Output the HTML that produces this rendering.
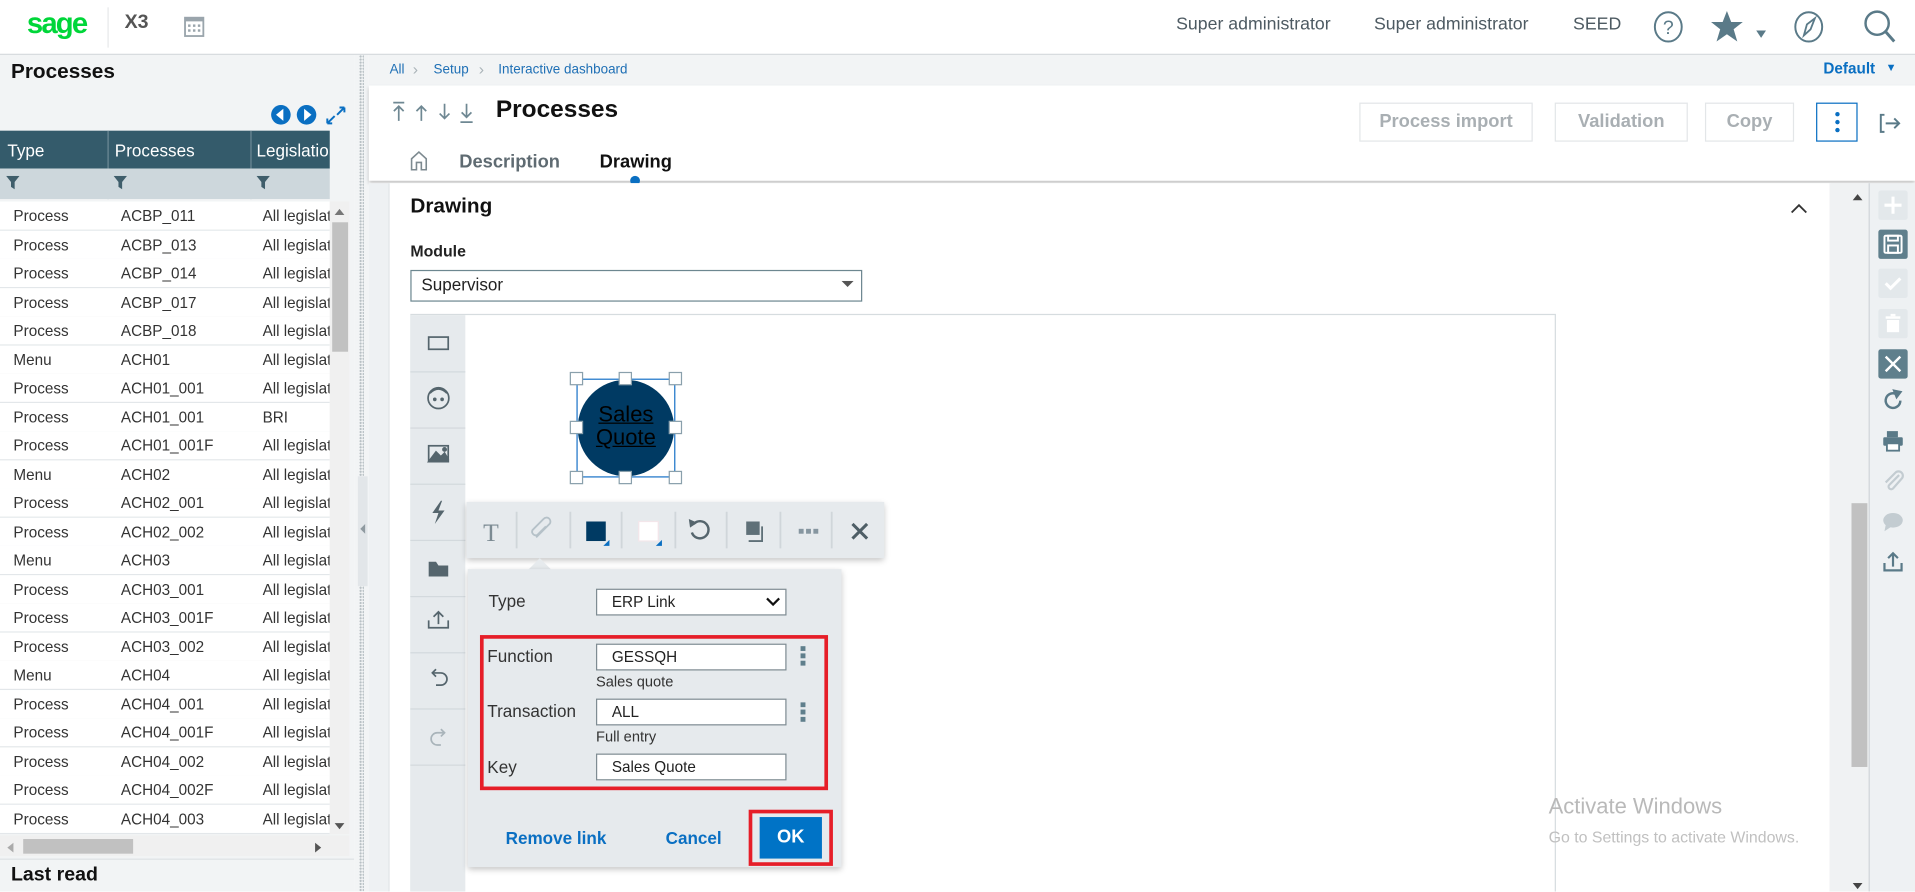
<!DOCTYPE html>
<html><head><meta charset="utf-8">
<style>
html,body{margin:0;padding:0;width:1915px;height:891px;overflow:hidden;background:#fff}
#w{position:absolute;left:0;top:0;width:1568px;height:730px;transform:scale(1.22130);transform-origin:0 0;font-family:"Liberation Sans",sans-serif;color:#222;overflow:hidden}
.a{position:absolute}
.t{position:absolute;white-space:nowrap}
.row{position:absolute;left:0;width:270px;height:23px;border-bottom:1px solid #e3e7ea;background:#fff;font-size:12.5px;color:#333}
.row span{position:absolute;top:5px;white-space:nowrap;overflow:hidden}
.row span:nth-child(3){width:55px}
.btn{position:absolute;top:84px;height:30px;border:1.5px solid #e3e6e8;background:#fff;color:#a9afb3;font-size:15px;font-weight:bold;text-align:center;line-height:30px}
.tool{position:absolute;left:336px;width:45px;height:46px;border-bottom:1px solid #d3d9dd}
.rt{position:absolute;left:1538px;width:24px;height:24px;border-radius:2px}
.lbl{position:absolute;font-size:14px;color:#333}
.inp{position:absolute;left:488px;width:154px;height:20px;border:1px solid #7f8c93;background:#fff;font-size:12.5px;line-height:20px;padding-left:12px;box-sizing:content-box}
</style></head><body><div id="w">

<!-- top bar -->
<div class="a" style="left:0;top:0;width:1568px;height:44px;background:#fff;border-bottom:1px solid #d6dadd"></div>
<div class="t" style="left:22px;top:6px;font-size:24px;font-weight:bold;color:#00d639;letter-spacing:-1.5px">sage</div>
<div class="a" style="left:88px;top:6px;width:1px;height:33px;background:#e6e8ea"></div>
<div class="t" style="left:102px;top:10px;font-size:16px;font-weight:bold;color:#555">X3</div>
<svg class="a" style="left:150px;top:11px" width="18" height="20" viewBox="0 0 18 20"><rect x="1.5" y="3.5" width="15" height="15" fill="none" stroke="#9aa5ac" stroke-width="1.5"/><rect x="1.5" y="3.5" width="15" height="3" fill="#9aa5ac"/><g fill="#9aa5ac"><rect x="4" y="9" width="2" height="2"/><rect x="8" y="9" width="2" height="2"/><rect x="12" y="9" width="2" height="2"/><rect x="4" y="13" width="2" height="2"/><rect x="8" y="13" width="2" height="2"/><rect x="12" y="13" width="2" height="2"/></g></svg>
<div class="t" style="left:963px;top:12px;font-size:14.5px;color:#4d5a62">Super administrator</div>
<div class="t" style="left:1125px;top:12px;font-size:14.5px;color:#4d5a62">Super administrator</div>
<div class="t" style="left:1288px;top:12px;font-size:14.5px;color:#4d5a62">SEED</div>
<svg class="a" style="left:1352px;top:7px" width="28" height="30"><ellipse cx="14" cy="15" rx="11" ry="12" fill="none" stroke="#5a7a88" stroke-width="1.6"/><text x="14" y="21" font-size="16" text-anchor="middle" fill="#5a7a88" font-family="Liberation Sans">?</text></svg>
<svg class="a" style="left:1400px;top:7px" width="50" height="30"><polygon points="14,2 17.5,11 27,11 19.5,17 22.5,27 14,21 5.5,27 8.5,17 1,11 10.5,11" fill="#5a7a88"/><polygon points="38,18 46,18 42,24" fill="#5a7a88"/></svg>
<svg class="a" style="left:1467px;top:7px" width="28" height="30"><ellipse cx="14" cy="15" rx="11" ry="12" fill="none" stroke="#5a7a88" stroke-width="1.6"/><path d="M19 8 L15.5 17 L10 22 L12.5 13 Z" fill="none" stroke="#5a7a88" stroke-width="1.5"/></svg>
<svg class="a" style="left:1524px;top:6px" width="30" height="32"><circle cx="13" cy="13" r="9.5" fill="none" stroke="#5a7a88" stroke-width="2"/><line x1="20" y1="20" x2="27" y2="28" stroke="#5a7a88" stroke-width="2.4"/></svg>

<!-- left panel -->
<div class="a" style="left:0;top:45px;width:290px;height:685px;background:#f2f4f5"></div>
<div class="t" style="left:9px;top:49px;font-size:17px;font-weight:bold;color:#111">Processes</div>
<svg class="a" style="left:221px;top:85px" width="66" height="18"><circle cx="9" cy="9" r="8" fill="#0a6fc2"/><polygon points="11,4 5,9 11,14" fill="#fff"/><circle cx="30" cy="9" r="8" fill="#0a6fc2"/><polygon points="28,4 34,9 28,14" fill="#fff"/><path d="M47 16 L53 10 M47 16 L47 12 M47 16 L51 16 M61 3 L55 9 M61 3 L61 7 M61 3 L57 3" stroke="#0a6fc2" stroke-width="1.6" fill="none"/></svg>
<div class="a" style="left:0;top:107px;width:270px;height:31px;background:#345b6b"></div>
<div class="a" style="left:88px;top:107px;width:1px;height:56px;background:#6d8a96"></div>
<div class="a" style="left:205px;top:107px;width:1px;height:56px;background:#6d8a96"></div>
<div class="t" style="left:6px;top:115px;font-size:14px;color:#fff">Type</div>
<div class="t" style="left:94px;top:115px;font-size:14px;color:#fff">Processes</div>
<div class="t" style="left:210px;top:115px;font-size:14px;color:#fff;width:60px;overflow:hidden">Legislation</div>
<div class="a" style="left:0;top:138px;width:270px;height:25px;background:#cdd7dc"></div>
<svg class="a" style="left:5px;top:144px" width="12" height="12"><polygon points="0,0 11,0 7,5 7,11 4,9 4,5" fill="#3f5e6b"/></svg>
<svg class="a" style="left:93px;top:144px" width="12" height="12"><polygon points="0,0 11,0 7,5 7,11 4,9 4,5" fill="#3f5e6b"/></svg>
<svg class="a" style="left:210px;top:144px" width="12" height="12"><polygon points="0,0 11,0 7,5 7,11 4,9 4,5" fill="#3f5e6b"/></svg>

<div class="row" style="top:165px"><span style="left:11px">Process</span><span style="left:99px">ACBP_011</span><span style="left:215px">All legislation</span></div>
<div class="row" style="top:188.5px"><span style="left:11px">Process</span><span style="left:99px">ACBP_013</span><span style="left:215px">All legislation</span></div>
<div class="row" style="top:212px"><span style="left:11px">Process</span><span style="left:99px">ACBP_014</span><span style="left:215px">All legislation</span></div>
<div class="row" style="top:235.5px"><span style="left:11px">Process</span><span style="left:99px">ACBP_017</span><span style="left:215px">All legislation</span></div>
<div class="row" style="top:259px"><span style="left:11px">Process</span><span style="left:99px">ACBP_018</span><span style="left:215px">All legislation</span></div>
<div class="row" style="top:282.5px"><span style="left:11px">Menu</span><span style="left:99px">ACH01</span><span style="left:215px">All legislation</span></div>
<div class="row" style="top:306px"><span style="left:11px">Process</span><span style="left:99px">ACH01_001</span><span style="left:215px">All legislation</span></div>
<div class="row" style="top:329.5px"><span style="left:11px">Process</span><span style="left:99px">ACH01_001</span><span style="left:215px">BRI</span></div>
<div class="row" style="top:353px"><span style="left:11px">Process</span><span style="left:99px">ACH01_001F</span><span style="left:215px">All legislation</span></div>
<div class="row" style="top:376.5px"><span style="left:11px">Menu</span><span style="left:99px">ACH02</span><span style="left:215px">All legislation</span></div>
<div class="row" style="top:400px"><span style="left:11px">Process</span><span style="left:99px">ACH02_001</span><span style="left:215px">All legislation</span></div>
<div class="row" style="top:423.5px"><span style="left:11px">Process</span><span style="left:99px">ACH02_002</span><span style="left:215px">All legislation</span></div>
<div class="row" style="top:447px"><span style="left:11px">Menu</span><span style="left:99px">ACH03</span><span style="left:215px">All legislation</span></div>
<div class="row" style="top:470.5px"><span style="left:11px">Process</span><span style="left:99px">ACH03_001</span><span style="left:215px">All legislation</span></div>
<div class="row" style="top:494px"><span style="left:11px">Process</span><span style="left:99px">ACH03_001F</span><span style="left:215px">All legislation</span></div>
<div class="row" style="top:517.5px"><span style="left:11px">Process</span><span style="left:99px">ACH03_002</span><span style="left:215px">All legislation</span></div>
<div class="row" style="top:541px"><span style="left:11px">Menu</span><span style="left:99px">ACH04</span><span style="left:215px">All legislation</span></div>
<div class="row" style="top:564.5px"><span style="left:11px">Process</span><span style="left:99px">ACH04_001</span><span style="left:215px">All legislation</span></div>
<div class="row" style="top:588px"><span style="left:11px">Process</span><span style="left:99px">ACH04_001F</span><span style="left:215px">All legislation</span></div>
<div class="row" style="top:611.5px"><span style="left:11px">Process</span><span style="left:99px">ACH04_002</span><span style="left:215px">All legislation</span></div>
<div class="row" style="top:635px"><span style="left:11px">Process</span><span style="left:99px">ACH04_002F</span><span style="left:215px">All legislation</span></div>
<div class="row" style="top:658.5px"><span style="left:11px">Process</span><span style="left:99px">ACH04_003</span><span style="left:215px">All legislation</span></div>
<div class="a" style="left:270px;top:165px;width:16px;height:518px;background:#f0f0f0"></div>
<div class="a" style="left:272px;top:182px;width:13px;height:106px;background:#c1c1c1"></div>
<svg class="a" style="left:273px;top:170px" width="10" height="8"><polygon points="1,6 9,6 5,1" fill="#777"/></svg>
<svg class="a" style="left:273px;top:672px" width="10" height="8"><polygon points="1,2 9,2 5,7" fill="#555"/></svg>
<div class="a" style="left:0;top:684px;width:286px;height:17px;background:#f0f0f0"></div>
<div class="a" style="left:19px;top:687px;width:90px;height:12px;background:#c1c1c1"></div>
<svg class="a" style="left:5px;top:689px" width="8" height="10"><polygon points="6,1 6,9 1,5" fill="#aaa"/></svg>
<svg class="a" style="left:256px;top:689px" width="8" height="10"><polygon points="2,1 2,9 7,5" fill="#555"/></svg>
<div class="a" style="left:0;top:703px;width:290px;height:1px;background:#dde2e5"></div>
<div class="t" style="left:9px;top:708px;font-size:16px;font-weight:bold;color:#111">Last read</div>

<!-- splitter -->
<div class="a" style="left:290px;top:45px;width:12px;height:685px;background:#f2f4f5"></div>
<div class="a" style="left:294px;top:45px;width:4px;height:685px;background-image:radial-gradient(#b9c1c5 0.8px,transparent 1px);background-size:2.5px 2.5px"></div>
<div class="a" style="left:293px;top:390px;width:8px;height:90px;background:#e2e6e9"></div>
<svg class="a" style="left:294px;top:428px" width="6" height="10"><polygon points="5,1 5,9 1,5" fill="#8f9aa0"/></svg>

<!-- breadcrumb -->
<div class="a" style="left:302px;top:45px;width:1266px;height:25px;background:#f2f4f5"></div>
<div class="t" style="left:319px;top:51px;font-size:11px;color:#1e6fb5">All</div>
<div class="t" style="left:338px;top:49px;font-size:13px;color:#aab3b8">›</div>
<div class="t" style="left:355px;top:51px;font-size:11px;color:#1e6fb5">Setup</div>
<div class="t" style="left:392px;top:49px;font-size:13px;color:#aab3b8">›</div>
<div class="t" style="left:408px;top:51px;font-size:11px;color:#1e6fb5">Interactive dashboard</div>
<div class="t" style="left:1493px;top:49px;font-size:12.5px;font-weight:bold;color:#0a6fc2">Default</div>
<div class="t" style="left:1544px;top:50px;font-size:9px;color:#0a6fc2">▼</div>

<!-- header -->
<div class="a" style="left:302px;top:70px;width:1266px;height:78px;background:#fff;box-shadow:0 2px 3px rgba(0,0,0,0.25)"></div>
<svg class="a" style="left:320px;top:82px" width="72" height="20" fill="none" stroke="#6f8893" stroke-width="1.4"><line x1="2" y1="2" x2="11" y2="2"/><path d="M6.5 17 V5 M2.5 9 L6.5 5 L10.5 9"/><path d="M25 17 V5 M21 9 L25 5 L29 9"/><path d="M44 3 V15 M40 11 L44 15 L48 11"/><path d="M62 3 V14 M58 10 L62 14 L66 10"/><line x1="57" y1="18" x2="67" y2="18"/></svg>
<div class="t" style="left:406px;top:79px;font-size:20px;font-weight:bold;color:#111">Processes</div>
<div class="btn" style="left:1113px;width:140px">Process import</div>
<div class="btn" style="left:1273px;width:107px">Validation</div>
<div class="btn" style="left:1396px;width:71px">Copy</div>
<div class="a" style="left:1487px;top:84px;width:32px;height:30px;border:1.5px solid #0a6fc2;background:#fff"></div>
<svg class="a" style="left:1502px;top:91px" width="5" height="20"><circle cx="2.5" cy="2.5" r="1.8" fill="#0a6fc2"/><circle cx="2.5" cy="9" r="1.8" fill="#0a6fc2"/><circle cx="2.5" cy="15.5" r="1.8" fill="#0a6fc2"/></svg>
<svg class="a" style="left:1538px;top:92px" width="20" height="18" fill="none" stroke="#5a7a88" stroke-width="1.6"><path d="M5 2 H2 V16 H5"/><path d="M6 9 H17 M13 5 L17 9 L13 13"/></svg>
<svg class="a" style="left:335px;top:123px" width="16" height="17" fill="none" stroke="#7d8a90" stroke-width="1.3"><path d="M2 16 V7 L8 1.5 L14 7 V16 H10 V10 H6 V16 Z"/></svg>
<div class="t" style="left:376px;top:124px;font-size:15px;font-weight:bold;color:#5f6b72">Description</div>
<div class="t" style="left:491px;top:124px;font-size:15px;font-weight:bold;color:#111">Drawing</div>
<div class="a" style="left:516px;top:144px;width:8px;height:8px;border-radius:50%;background:#0a6fc2"></div>

<!-- content bg -->
<div class="a" style="left:302px;top:150px;width:1266px;height:580px;background:#eef1f3"></div>
<div class="a" style="left:318px;top:150px;width:1180px;height:580px;background:#fff;border-left:1px solid #dfe3e6"></div>
<div class="a" style="left:1498px;top:150px;width:32px;height:580px;background:#f0f2f3;border-right:1px solid #d0d5d8"></div>
<div class="a" style="left:1516px;top:412px;width:13px;height:216px;background:#c1c1c1"></div>
<svg class="a" style="left:1516px;top:158px" width="10" height="8"><polygon points="1,6 9,6 5,1" fill="#444"/></svg>
<svg class="a" style="left:1516px;top:721px" width="10" height="8"><polygon points="1,2 9,2 5,7" fill="#444"/></svg>

<!-- right toolbar -->
<div class="rt" style="top:156px;background:#e3e8eb"></div>
<svg class="a" style="left:1538px;top:156px" width="24" height="24"><path d="M12 5 V19 M5 12 H19" stroke="#fff" stroke-width="2.5"/></svg>
<div class="rt" style="top:188px;background:#5f7f8c"></div>
<svg class="a" style="left:1538px;top:188px" width="24" height="24" fill="none" stroke="#fff" stroke-width="1.6"><rect x="5" y="5" width="14" height="14" rx="1"/><rect x="8" y="5" width="8" height="4"/><rect x="8" y="13" width="8" height="6"/></svg>
<div class="rt" style="top:220px;background:#e3e8eb"></div>
<svg class="a" style="left:1538px;top:220px" width="24" height="24"><path d="M6 12 L10 16 L18 8" stroke="#fff" stroke-width="2.5" fill="none"/></svg>
<div class="rt" style="top:253px;background:#e3e8eb"></div>
<svg class="a" style="left:1538px;top:253px" width="24" height="24" fill="#fff"><rect x="6" y="6" width="12" height="2"/><rect x="10" y="4" width="4" height="2"/><rect x="7" y="9" width="10" height="10"/></svg>
<div class="rt" style="top:286px;background:#5f7f8c"></div>
<svg class="a" style="left:1538px;top:286px" width="24" height="24"><path d="M6 6 L18 18 M18 6 L6 18" stroke="#fff" stroke-width="2"/></svg>
<svg class="a" style="left:1540px;top:318px" width="20" height="20" fill="none" stroke="#5a7a88" stroke-width="2"><path d="M16 10 A6 6 0 1 1 13 4.8"/><polygon points="11,2 16,3 13,7" fill="#5a7a88"/></svg>
<svg class="a" style="left:1540px;top:351px" width="20" height="20" fill="#5a7a88"><rect x="5" y="2" width="9" height="5"/><rect x="2" y="7" width="16" height="7" rx="1"/><rect x="5" y="12" width="10" height="6" fill="#fff" stroke="#5a7a88" stroke-width="1.5"/></svg>
<svg class="a" style="left:1540px;top:384px" width="20" height="20" fill="none" stroke="#c3ccd1" stroke-width="1.8"><path d="M15 5 L7 13 A2 2 0 0 0 10 16 L17 8 A3.5 3.5 0 0 0 12 3 L4 11"/></svg>
<svg class="a" style="left:1540px;top:417px" width="20" height="20"><ellipse cx="10" cy="9" rx="8" ry="6" fill="#c3ccd1"/><polygon points="4,13 3,18 9,14" fill="#c3ccd1"/></svg>
<svg class="a" style="left:1540px;top:450px" width="20" height="20" fill="none" stroke="#5a7a88" stroke-width="1.8"><path d="M3 11 V17 H17 V11"/><path d="M10 14 V3 M6 7 L10 3 L14 7"/></svg>

<!-- card -->
<div class="t" style="left:336px;top:159px;font-size:17px;font-weight:bold;color:#111">Drawing</div>
<svg class="a" style="left:1466px;top:166px" width="14" height="10"><path d="M1 8 L7 2 L13 8" stroke="#333" stroke-width="1.5" fill="none"/></svg>
<div class="t" style="left:336px;top:198px;font-size:13px;font-weight:bold;color:#222">Module</div>
<div class="a" style="left:336px;top:221px;width:368px;height:24px;border:1px solid #6d8790;background:#fff"></div>
<div class="t" style="left:345px;top:225px;font-size:14px;color:#222">Supervisor</div>
<svg class="a" style="left:689px;top:230px" width="10" height="6"><polygon points="0,0 10,0 5,5" fill="#555"/></svg>

<!-- drawing area -->
<div class="a" style="left:336px;top:257px;width:936px;height:480px;border:1px solid #d6dcdf;background:#fff"></div>
<div class="a" style="left:336px;top:258px;width:45px;height:480px;background:#e6eaed"></div>
<div class="tool" style="top:258px"></div><div class="tool" style="top:304px"></div><div class="tool" style="top:350px"></div><div class="tool" style="top:396px"></div><div class="tool" style="top:442px"></div><div class="tool" style="top:488px"></div><div class="tool" style="top:534px"></div><div class="tool" style="top:580px"></div>
<svg class="a" style="left:336px;top:258px" width="45" height="370" fill="none" stroke="#55656d" stroke-width="1.4">
<rect x="15" y="18" width="16" height="10"/>
<circle cx="23" cy="68" r="8.5"/><path d="M16 64 Q23 57 30 64" /><circle cx="20" cy="69" r="0.8" fill="#55656d"/><circle cx="26" cy="69" r="0.8" fill="#55656d"/>
<rect x="15" y="107" width="16" height="13"/><path d="M15 120 L21 112 L25 116 L28 113 L31 118 V120 Z" fill="#55656d"/><circle cx="28" cy="110" r="1.3" fill="#55656d"/>
<polygon points="25,152 18,162 23,162 20,171 28,160 23,160 26,152" fill="#55656d" stroke="none"/>
<path d="M15 202 V214 H31 V205 H23 L21 202 Z" fill="#55656d" stroke="none"/>
<path d="M15 250 V256 H31 V250"/><path d="M23 253 V244 M19 247 L23 243 L27 247"/>
<path d="M18 293 H25 A5 5 0 0 1 25 303 H21"/><path d="M21 290 L18 293 L21 296"/>
<path d="M28 342 H22 A5 5 0 0 0 22 352 H25" stroke="#a9b4ba"/><path d="M25 339 L28 342 L25 345" stroke="#a9b4ba"/>
</svg>

<!-- shape -->
<div class="a" style="left:472px;top:310px;width:81px;height:81px;border:1.5px solid #1a73c8;box-sizing:border-box"></div>
<div class="a" style="left:473px;top:311px;width:79px;height:79px;border-radius:50%;background:#003a63"></div>
<div class="t" style="left:473px;top:330px;width:79px;text-align:center;font-size:18px;line-height:19px;color:#000;text-decoration:underline">Sales<br>Quote</div>
<svg class="a" style="left:465px;top:303px" width="96" height="96" fill="#fff" stroke="#8aa0ac" stroke-width="1"><rect x="2" y="2" width="10" height="10"/><rect x="42" y="2" width="10" height="10"/><rect x="83" y="2" width="10" height="10"/><rect x="2" y="42" width="10" height="10"/><rect x="83" y="42" width="10" height="10"/><rect x="2" y="83" width="10" height="10"/><rect x="42" y="83" width="10" height="10"/><rect x="83" y="83" width="10" height="10"/></svg>

<!-- toolbar popup -->
<div class="a" style="left:382px;top:411px;width:342px;height:46px;background:#e6eaed;box-shadow:0 2px 5px rgba(0,0,0,0.25)"></div>
<svg class="a" style="left:382px;top:411px" width="342" height="46">
<g stroke="#d0d6da" stroke-width="1.5"><line x1="41" y1="8" x2="41" y2="38"/><line x1="85" y1="8" x2="85" y2="38"/><line x1="127" y1="8" x2="127" y2="38"/><line x1="171" y1="8" x2="171" y2="38"/><line x1="213" y1="8" x2="213" y2="38"/><line x1="257" y1="8" x2="257" y2="38"/><line x1="299" y1="8" x2="299" y2="38"/></g>
<text x="20" y="32" font-size="21" text-anchor="middle" fill="#7c8b93" font-family="Liberation Serif">T</text>
<path d="M57 29 L68 18 A3 3 0 0 0 63 14 L54 23 A3 3 0 0 0 58 27 L65 20" fill="none" stroke="#b5c1c8" stroke-width="1.5"/>
<rect x="98" y="16" width="16" height="16" fill="#003a63"/><polygon points="117,36 117,31 112,36" fill="#0a6fc2"/>
<rect x="141" y="16" width="16" height="16" fill="#fff" stroke="#f3e6ea"/><polygon points="160,36 160,31 155,36" fill="#0a6fc2"/>
<path d="M186 18 A7 7 0 1 1 184.5 25" fill="none" stroke="#55656d" stroke-width="2"/><polygon points="182,14 189,17 183,21" fill="#55656d"/>
<rect x="229" y="16" width="11" height="11" fill="#5f7078"/><path d="M242 20 V32 H231" fill="none" stroke="#5f7078" stroke-width="1.5"/>
<g fill="#8696a0"><rect x="272" y="22" width="4" height="4"/><rect x="278" y="22" width="4" height="4"/><rect x="284" y="22" width="4" height="4"/></g>
<path d="M316 18 L328 30 M328 18 L316 30" stroke="#4e5e66" stroke-width="2.5"/>
</svg>
<svg class="a" style="left:432px;top:456px" width="20" height="12"><polygon points="0,11 10,1 20,11" fill="#e6eaed"/></svg>

<!-- form popup -->
<div class="a" style="left:383px;top:466px;width:306px;height:244px;background:#e6eaed;box-shadow:0 2px 5px rgba(0,0,0,0.25)"></div>
<div class="lbl" style="left:400px;top:484px">Type</div>
<div class="inp" style="top:482px;width:142px;font-size:12.5px">ERP Link</div>
<svg class="a" style="left:627px;top:489px" width="12" height="8"><path d="M1 1 L6 6 L11 1" stroke="#111" stroke-width="1.8" fill="none"/></svg>
<div class="a" style="left:393px;top:520px;width:279px;height:121px;border:3px solid #e61e28"></div>
<div class="lbl" style="left:399px;top:529px">Function</div>
<div class="inp" style="top:527px;width:142px">GESSQH</div>
<div class="t" style="left:488px;top:551px;font-size:12px;color:#333">Sales quote</div>
<svg class="a" style="left:655px;top:529px" width="6" height="20" fill="#5f7f8c"><rect x="0.5" y="0" width="4" height="4"/><rect x="0.5" y="6" width="4" height="4"/><rect x="0.5" y="12" width="4" height="4"/></svg>
<div class="lbl" style="left:399px;top:574px">Transaction</div>
<div class="inp" style="top:572px;width:142px">ALL</div>
<div class="t" style="left:488px;top:596px;font-size:12px;color:#333">Full entry</div>
<svg class="a" style="left:655px;top:575px" width="6" height="20" fill="#5f7f8c"><rect x="0.5" y="0" width="4" height="4"/><rect x="0.5" y="6" width="4" height="4"/><rect x="0.5" y="12" width="4" height="4"/></svg>
<div class="lbl" style="left:399px;top:620px">Key</div>
<div class="inp" style="top:617px;width:142px">Sales Quote</div>
<div class="t" style="left:414px;top:678px;font-size:14px;font-weight:bold;color:#0a6fc2">Remove link</div>
<div class="t" style="left:545px;top:678px;font-size:14px;font-weight:bold;color:#0a6fc2">Cancel</div>
<div class="a" style="left:613px;top:663px;width:63px;height:40px;border:3px solid #e61e28"></div>
<div class="a" style="left:622px;top:669px;width:51px;height:34px;background:#0073c6;color:#fff;font-size:15px;font-weight:bold;text-align:center;line-height:34px">OK</div>

<!-- watermark -->
<div class="t" style="left:1268px;top:650px;font-size:18px;color:#b9b9b9">Activate Windows</div>
<div class="t" style="left:1268px;top:678px;font-size:13px;color:#c0c0c0">Go to Settings to activate Windows.</div>

</div></body></html>
